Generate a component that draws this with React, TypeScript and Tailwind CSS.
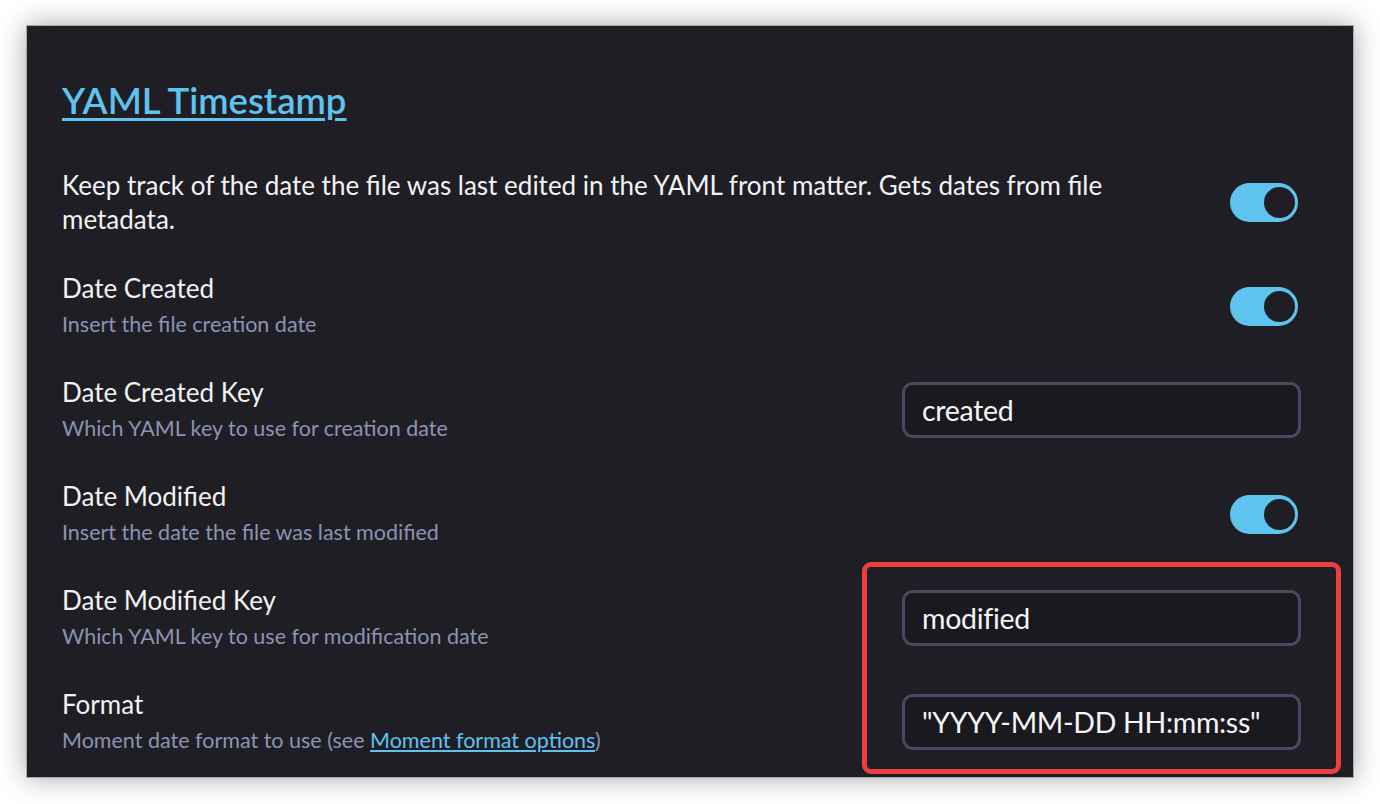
import { useState } from 'react';

const font = { fontFamily: 'Lato, "Noto Sans", sans-serif' };

function Toggle({ on }: { on: boolean }) {
  return (
    <div className={`mr-[3px] flex h-[39px] w-[68px] shrink-0 items-center rounded-full px-[3px] ${on ? 'justify-end bg-[#5ec3ee]' : 'justify-start bg-[#3a3b48]'}`}>
      <div className="h-[31px] w-[31px] rounded-full bg-[#1f1e25]" />
    </div>
  );
}

function TextBox({ value }: { value: string }) {
  return (
    <div className="flex h-[56px] w-[399px] shrink-0 items-center whitespace-nowrap rounded-[11px] border-[3px] border-[#474a5e] bg-[#1a191f] px-[17px] text-[28.5px] tracking-[-0.3px] text-[#f5f5f5]">
      {value}
    </div>
  );
}

function Row({ name, desc, children }: { name: string; desc: React.ReactNode; children: React.ReactNode }) {
  return (
    <div className="flex h-[104px] items-center justify-between">
      <div className="flex flex-col">
        <div className="text-[26px] leading-[34px] text-[#f2f2f2]">{name}</div>
        <div className="mt-[2px] text-[21.5px] leading-[34px] text-[#8b94b3]">{desc}</div>
      </div>
      {children}
    </div>
  );
}

export default function App() {
  const [created] = useState('created');
  const [modified] = useState('modified');

  return (
    <div className="min-h-[804px] bg-white pl-[26px] pt-[25px]" style={font}>
      <div className="relative flex h-[753px] w-[1328px] flex-col border border-[#a8a8a8] bg-[#1f1e25] pl-[35px] pr-[52px] pt-[50px] shadow-[0_0_26px_rgba(0,0,0,0.35)]">
        <h2 className="mb-[26px] text-[36.5px] font-semibold leading-[48px] text-[#5ec3ee] underline decoration-[3px] underline-offset-[4px]">
          YAML Timestamp
        </h2>

        {/* Descripción general */}
        <div className="flex h-[104px] items-center justify-between">
          <div className="w-[1080px] text-[26px] leading-[34px] text-[#f2f2f2]">
            Keep track of the date the file was last edited in the YAML front matter. Gets dates from file metadata.
          </div>
          <Toggle on />
        </div>

        <Row name="Date Created" desc="Insert the file creation date">
          <Toggle on />
        </Row>
        <Row name="Date Created Key" desc="Which YAML key to use for creation date">
          <TextBox value={created} />
        </Row>
        <Row name="Date Modified" desc="Insert the date the file was last modified">
          <Toggle on />
        </Row>
        <Row name="Date Modified Key" desc="Which YAML key to use for modification date">
          <TextBox value={modified} />
        </Row>
        <Row
          name="Format"
          desc={
            <>
              Moment date format to use (see{' '}
              <a href="#" className="text-[#5ec3ee] underline underline-offset-2">Moment format options</a>)
            </>
          }
        >
          <TextBox value={'"YYYY-MM-DD HH:mm:ss"'} />
        </Row>

        {/* Marco rojo de anotación */}
        <div className="pointer-events-none absolute left-[835px] top-[536px] h-[212px] w-[479px] rounded-[9px] border-[5px] border-[#ef3e3e]" />
      </div>
    </div>
  );
}
